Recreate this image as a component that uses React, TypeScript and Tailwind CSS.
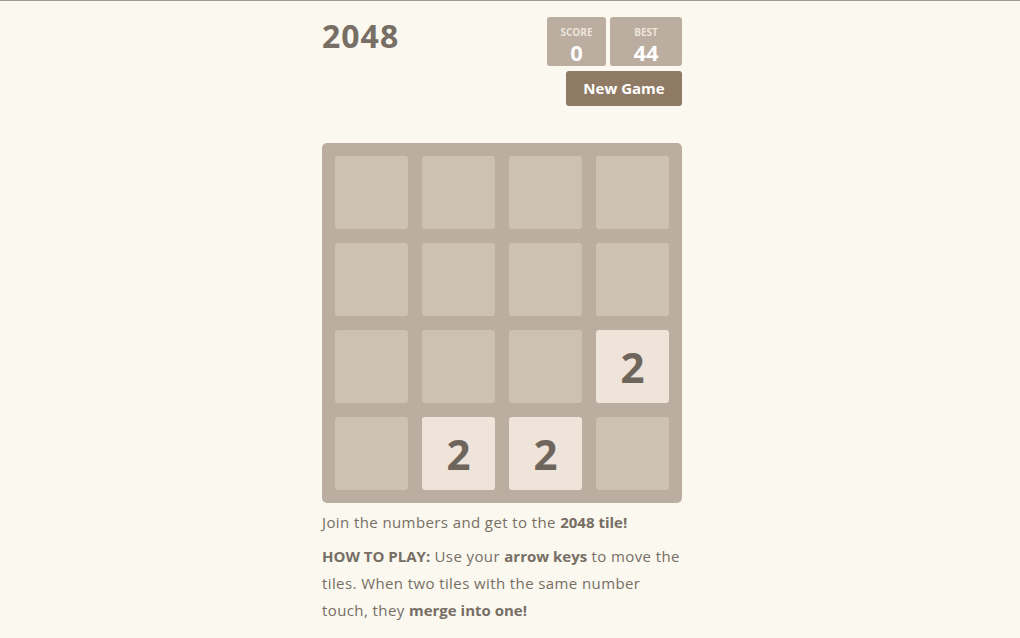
const board: number[][] = [
  [0, 0, 0, 0],
  [0, 0, 0, 0],
  [0, 0, 0, 2],
  [0, 2, 2, 0],
];

const ScoreBox = ({ label, value, width }: { label: string; value: number; width: string }) => (
  <div className={`${width} h-[49px] bg-[#bbada0] rounded-[3px] flex flex-col items-center pt-[9px]`}>
    <span className="text-[10px] leading-[12px] font-bold uppercase text-[#eee4da]">{label}</span>
    <span className="text-[22px] leading-[26px] font-bold text-white mt-[1px]">{value}</span>
  </div>
);

const B = ({ children }: { children: React.ReactNode }) => (
  <strong className="font-bold tracking-normal">{children}</strong>
);

const App = () => {
  return (
    <div className="min-h-screen bg-[#faf8ef] text-[#776e65] font-['Open_Sans',sans-serif]">
      <div className="h-px bg-[#9c9c98]" />
      <div className="ml-[322px] w-[360px] pt-[16px]">
        {/* Header */}
        <div className="flex justify-between">
          <h1 className="text-[32px] leading-[36px] font-bold mt-[1px] tracking-[1px]">2048</h1>
          <div className="flex flex-col items-end gap-[5px]">
            <div className="flex gap-[4px]">
              <ScoreBox label="Score" value={0} width="w-[59px]" />
              <ScoreBox label="Best" value={44} width="w-[72px]" />
            </div>
            <button className="w-[116px] h-[35px] bg-[#8f7a66] rounded-[3px] text-white text-[15px] font-bold">
              New Game
            </button>
          </div>
        </div>

        {/* Board */}
        <div className="mt-[37px] w-[360px] h-[360px] bg-[#bbada0] rounded-[5px] p-[13px] grid grid-cols-4 grid-rows-4 gap-[14px]">
          {board.flat().map((v, i) => (
            <div
              key={i}
              className={
                v
                  ? 'bg-[#eee4da] rounded-[3px] flex items-center justify-center text-[42px] font-bold text-[#6e655c]'
                  : 'bg-[#cdc1b4] rounded-[3px]'
              }
            >
              {v ? v : null}
            </div>
          ))}
        </div>

        {/* Instructions */}
        <div className="mt-[6px] text-[15px] leading-[27px] tracking-[0.4px]">
          <p className="mb-[7px]">
            Join the numbers and get to the <B>2048 tile!</B>
          </p>
          <p>
            <B>HOW TO PLAY:</B> Use your <B>arrow keys</B> to move the tiles. When two tiles with the same number
            touch, they <B>merge into one!</B>
          </p>
        </div>
      </div>
    </div>
  );
};

export default App;
